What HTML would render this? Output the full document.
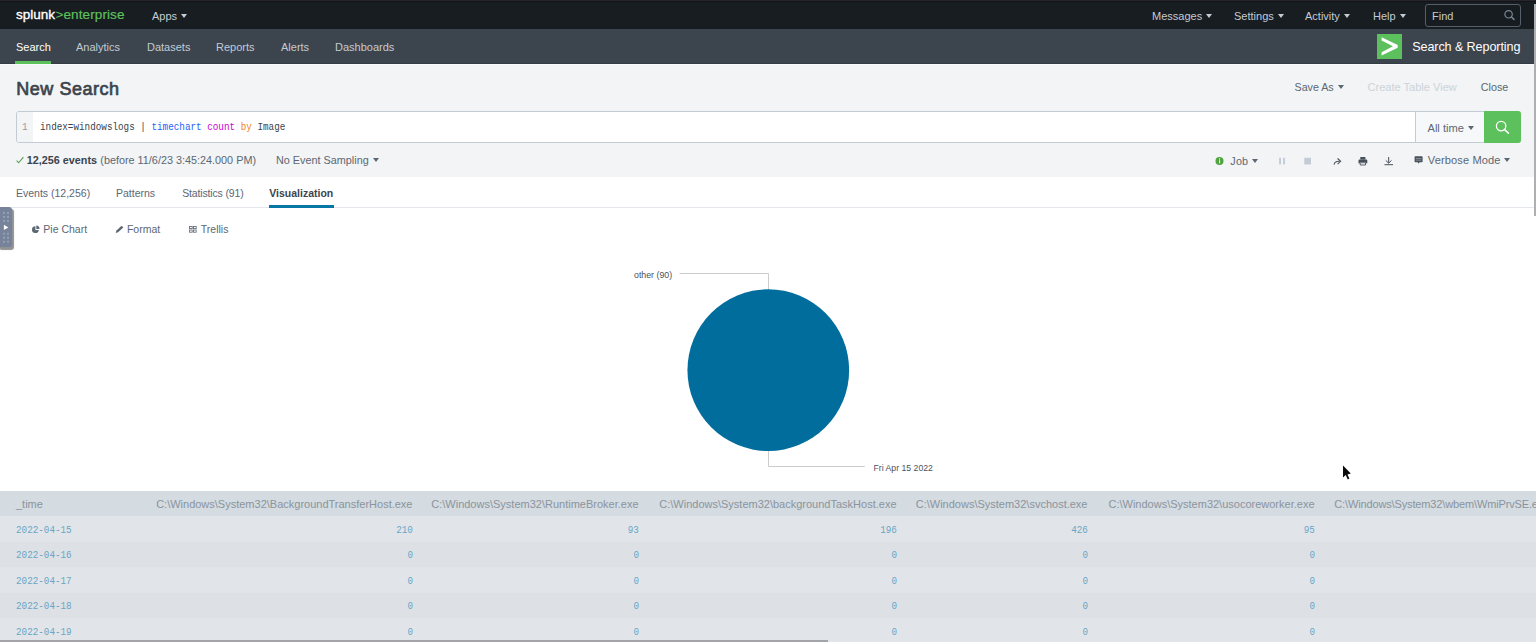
<!DOCTYPE html>
<html>
<head>
<meta charset="utf-8">
<title>Search | Splunk</title>
<style>
*{box-sizing:border-box;margin:0;padding:0}
html,body{width:1536px;height:642px;overflow:hidden;background:#fff}
body{font-family:"Liberation Sans",sans-serif;color:#3c444d;position:relative}
.abs{position:absolute;white-space:nowrap;line-height:1}
.mono{font-family:"Liberation Mono",monospace}
#topline{left:0;top:0;width:1536px;height:2px;background:linear-gradient(#27252b 0,#27252b 50%,#111518 50%,#111518 100%)}
#topbar{left:0;top:0;width:1536px;height:29px;background:#181d21}
#navbar{left:0;top:29px;width:1536px;height:35px;background:#3c444d}
#graybg{left:0;top:64px;width:1536px;height:113px;background:#f2f4f5}
.tb{color:#c3cbd4;font-size:11px;top:10.6px}
.nv{color:#c3cbd4;font-size:11px;top:41.7px}
.caret{display:inline-block;width:0;height:0;border-left:3.25px solid transparent;border-right:3.25px solid transparent;border-top:4px solid currentColor;vertical-align:middle;margin-left:4px;position:relative;top:-1px}
.th{font-size:11px;color:#8a949e}
.td{font-size:11.6px;color:#6aa5c5;transform:scaleX(0.80);transform-origin:right top}
.td.l{transform-origin:left top}
.sm{font-size:10.5px;color:#5c6773}
</style>
</head>
<body>
<div class="abs" id="topbar"></div>
<div class="abs" id="topline"></div>
<div class="abs" id="navbar"></div>
<div class="abs" id="graybg"></div>
<div class="abs" style="left:0;top:63px;width:1536px;height:1px;background:#353c44"></div>
<div class="abs" style="left:0;top:64px;width:1536px;height:1px;background:#f9fafa"></div>

<!-- top bar -->
<div class="abs" id="logo" style="left:16px;top:8.2px;font-size:13.5px;color:#fff;-webkit-text-stroke:0.35px #fff">splunk</div>
<div class="abs" id="logogt" style="left:55.5px;top:8.2px;font-size:13.5px;color:#5cc05c">&gt;</div>
<div class="abs" id="logoent" style="left:63.5px;top:8.2px;font-size:13.5px;color:#5cc05c;letter-spacing:0.1px;-webkit-text-stroke:0.2px #5cc05c">enterprise</div>
<div class="abs tb" id="apps" style="left:152px">Apps<span class="caret"></span></div>
<div class="abs tb" id="messages" style="left:1152px">Messages<span class="caret"></span></div>
<div class="abs tb" id="settings" style="left:1234px">Settings<span class="caret"></span></div>
<div class="abs tb" id="activity" style="left:1305px">Activity<span class="caret"></span></div>
<div class="abs tb" id="help" style="left:1373px">Help<span class="caret"></span></div>
<div class="abs" id="findbox" style="left:1425px;top:3.9px;width:95.8px;height:22.8px;border:1px solid #56606b;border-radius:3px;background:#171c20"></div>
<div class="abs tb" id="find" style="left:1432px;top:10.8px">Find</div>
<svg class="abs" id="findicon" style="left:1500px;top:6px" width="18" height="18" viewBox="1500 6 18 18"><circle cx="1508.6" cy="14.3" r="3.7" fill="none" stroke="#7b8793" stroke-width="1.2"/><line x1="1511.4" y1="17" x2="1514" y2="19.4" stroke="#7b8793" stroke-width="1.5" stroke-linecap="round"/></svg>

<!-- nav bar -->
<div class="abs nv" id="nsearch" style="left:16px;color:#fff">Search</div>
<div class="abs" id="nunder" style="left:15px;top:61px;width:36px;height:3px;background:#5cc05c"></div>
<div class="abs nv" id="nanalytics" style="left:76px">Analytics</div>
<div class="abs nv" id="ndatasets" style="left:147px">Datasets</div>
<div class="abs nv" id="nreports" style="left:216px">Reports</div>
<div class="abs nv" id="nalerts" style="left:281px">Alerts</div>
<div class="abs nv" id="ndash" style="left:335px">Dashboards</div>
<div class="abs" id="appicon" style="left:1376.9px;top:33.7px;width:25.3px;height:25.2px;background:#5cc05c"></div>
<svg class="abs" id="appiconsvg" style="left:1376px;top:33px" width="28" height="27" viewBox="1376 33 28 27"><path d="M1381.6 37.2 L1397.7 44.9 L1397.7 47.8 L1381.6 55.4 L1381.6 52.3 L1392.9 46.35 L1381.6 40.4 Z" fill="#fff"/></svg>
<div class="abs" id="apptitle" style="left:1412.2px;top:40.5px;font-size:12.6px;letter-spacing:-0.1px;color:#fff">Search &amp; Reporting</div>

<!-- title row -->
<div class="abs" id="title" style="left:16.3px;top:80.3px;font-size:18px;letter-spacing:0.52px;-webkit-text-stroke:0.7px #3c444d;color:#3c444d">New Search</div>
<div class="abs sm" id="saveas" style="left:1294.5px;top:82px;color:#5c6773;font-size:10.7px">Save As<span class="caret"></span></div>
<div class="abs sm" id="ctv" style="left:1367.5px;top:82px;color:#cdd3da;font-size:11.05px">Create Table View</div>
<div class="abs sm" id="close" style="left:1480.8px;top:82px;color:#5c6773;font-size:10.75px">Close</div>

<!-- search bar -->
<div class="abs" id="sbox" style="left:16px;top:111px;width:1505px;height:32px;border:1px solid #c3cbd4;border-radius:3px;background:#fff"></div>
<div class="abs" id="sgutter" style="left:17px;top:112px;width:16px;height:30px;background:#f2f4f5;border-radius:2px 0 0 2px"></div>
<div class="abs mono" id="lineno" style="left:22.3px;top:122px;font-size:10.7px;color:#959aa0;transform:scaleX(0.869);transform-origin:left top">1</div>
<div class="abs mono" id="query" style="left:40px;top:122px;font-size:10.7px;color:#3c444d;transform:scaleX(0.869);transform-origin:left top">index=windowslogs | <span style="color:#2662fc">timechart</span> <span style="color:#cf00cf">count</span> <span style="color:#f58220">by</span> Image</div>
<div class="abs" id="alltimebg" style="left:1415px;top:112px;width:69px;height:30px;background:#f7f8fa;border-left:1px solid #c3cbd4"></div>
<div class="abs sm" id="alltime" style="left:1427.5px;top:122.8px;font-size:11.1px">All time<span class="caret"></span></div>
<div class="abs" id="gobtn" style="left:1484px;top:111px;width:37px;height:32px;background:#5cc05c;border-radius:0 3px 3px 0"></div>
<svg class="abs" id="goicon" style="left:1484px;top:111px" width="37" height="32" viewBox="1484 111 37 32"><circle cx="1501.1" cy="126.1" r="4.7" fill="none" stroke="#fff" stroke-width="1.3"/><line x1="1504.6" y1="129.7" x2="1508.4" y2="133.1" stroke="#fff" stroke-width="1.6" stroke-linecap="round"/></svg>

<!-- status row -->
<svg class="abs" id="check" style="left:16px;top:156px" width="8" height="8" viewBox="0 0 8 8"><path d="M0.6 4.6 L2.7 6.8 L7.4 1.2" fill="none" stroke="#53a051" stroke-width="1.1"/></svg>
<div class="abs sm" id="events" style="left:26.8px;top:155.3px;color:#3c444d;font-weight:bold;font-size:10.8px">12,256 events</div>
<div class="abs sm" id="before" style="left:100.3px;top:155.3px;color:#5c6773;font-size:10.84px">(before 11/6/23 3:45:24.000 PM)</div>
<div class="abs sm" id="sampling" style="left:276px;top:155.3px;color:#5c6773;font-size:10.83px">No Event Sampling<span class="caret"></span></div>

<svg class="abs" id="jobicons" style="left:1208px;top:150px" width="312" height="22" viewBox="1208 150 312 22">
<circle cx="1219.5" cy="161" r="4" fill="#4fa43f"/>
<rect x="1219" y="158.4" width="1.1" height="1.2" fill="#fff"/><rect x="1219" y="160.3" width="1.1" height="2.9" fill="#fff"/>
<rect x="1279.1" y="157.8" width="1.9" height="6.6" fill="#c3cbd4"/><rect x="1283.1" y="157.8" width="1.9" height="6.6" fill="#c3cbd4"/>
<rect x="1304.3" y="157.8" width="6.7" height="6.6" fill="#c3cbd4"/>
<path d="M1334.1 164.6 C1334.3 162.2 1336.2 161.2 1339.6 161.3" fill="none" stroke="#48515b" stroke-width="1.1"/>
<path d="M1337.6 158.5 L1340.6 161.3 L1337.6 164.1" fill="none" stroke="#48515b" stroke-width="1.1"/>
<path d="M1360.3 157 H1365.4 V159.6 H1360.3 Z" fill="#48515b"/>
<path d="M1358.5 160.4 a1 1 0 0 1 1-1 H1366.3 a1 1 0 0 1 1 1 V163.2 H1365.6 V161.9 H1360.1 V163.2 H1358.5 Z" fill="#48515b"/>
<path d="M1360.2 162.7 H1365.5 V165 H1360.2 Z" fill="none" stroke="#48515b" stroke-width="0.9"/>
<path d="M1388.65 157 V163" fill="none" stroke="#48515b" stroke-width="1"/>
<path d="M1385.8 160.4 L1388.65 163.2 L1391.5 160.4" fill="none" stroke="#48515b" stroke-width="1"/>
<path d="M1384.5 164.7 H1393" fill="none" stroke="#48515b" stroke-width="1"/>
<path d="M1415.4 156.3 H1421.8 a0.8 0.8 0 0 1 0.8 0.8 V161.4 a0.8 0.8 0 0 1 -0.8 0.8 H1419.6 L1418 163.7 V162.2 H1415.4 a0.8 0.8 0 0 1 -0.8 -0.8 V157.1 a0.8 0.8 0 0 1 0.8 -0.8 Z" fill="#48515b"/>
<path d="M1415.8 158.5 H1421.4 M1415.8 160.2 H1421.4" stroke="#aeb6bf" stroke-width="0.6"/>
</svg>
<div class="abs sm" id="job" style="left:1230.3px;top:155.6px;color:#5c6773;font-size:10.8px;letter-spacing:0.2px">Job<span class="caret" style="margin-left:3.4px"></span></div>
<div class="abs sm" id="verbose" style="left:1427.8px;top:155px;color:#5c6773;font-size:11.1px;letter-spacing:0.1px">Verbose Mode<span class="caret" style="margin-left:3.2px"></span></div>

<!-- tabs -->
<div class="abs" id="tabline" style="left:0;top:207px;width:1536px;height:1px;background:#e4e8ec"></div>
<div class="abs sm" id="tab1" style="left:16px;top:187.5px;color:#5c6773">Events (12,256)</div>
<div class="abs sm" id="tab2" style="left:116px;top:187.5px;color:#5c6773">Patterns</div>
<div class="abs sm" id="tab3" style="left:182.2px;top:187.5px;color:#5c6773;letter-spacing:-0.15px">Statistics (91)</div>
<div class="abs sm" id="tab4" style="left:269.3px;top:187.5px;color:#3c444d;font-weight:bold">Visualization</div>
<div class="abs" id="tabunder" style="left:269px;top:205.2px;width:64.6px;height:2.5px;background:#0877a6"></div>

<!-- viz toolbar -->
<div class="abs" id="handle" style="left:-3px;top:207.4px;width:14.8px;height:39.7px;background:#76839a;border-radius:3px;box-shadow:2px 2.5px 0.8px rgba(110,110,110,0.75)"></div>
<svg class="abs" id="handlesvg" style="left:0;top:207px" width="14" height="42" viewBox="0 0 14 42"><rect x="3.1" y="5.0" width="1.8" height="1.8" fill="#99a5b7"/><rect x="7.1" y="5.0" width="1.8" height="1.8" fill="#99a5b7"/><rect x="3.1" y="9.0" width="1.8" height="1.8" fill="#99a5b7"/><rect x="7.1" y="9.0" width="1.8" height="1.8" fill="#99a5b7"/><rect x="3.1" y="13.0" width="1.8" height="1.8" fill="#99a5b7"/><rect x="7.1" y="13.0" width="1.8" height="1.8" fill="#99a5b7"/><rect x="3.1" y="25.8" width="1.8" height="1.8" fill="#99a5b7"/><rect x="7.1" y="25.8" width="1.8" height="1.8" fill="#99a5b7"/><rect x="3.1" y="29.8" width="1.8" height="1.8" fill="#99a5b7"/><rect x="7.1" y="29.8" width="1.8" height="1.8" fill="#99a5b7"/><rect x="3.1" y="33.8" width="1.8" height="1.8" fill="#99a5b7"/><rect x="7.1" y="33.8" width="1.8" height="1.8" fill="#99a5b7"/><path d="M3.9 17.8 L8.4 20.45 L3.9 23.1 Z" fill="#fff"/></svg>
<svg class="abs" id="pieicon" style="left:32px;top:225px" width="8" height="9" viewBox="0 0 8 9"><path d="M3.4 1.2 A3.4 3.4 0 1 0 6.8 4.9 L3.4 4.9 Z" fill="#5c6773"/><path d="M4.3 0.5 A3.4 3.4 0 0 1 7.5 3.9 L4.3 3.9 Z" fill="#5c6773"/></svg>
<div class="abs sm" id="piechart" style="color:#5c6773;left:43.3px;top:223.9px">Pie Chart</div>
<svg class="abs" id="fmticon" style="left:115px;top:225px" width="9" height="9" viewBox="0 0 9 9"><path d="M0.7 7.9 L1.5 5.6 L6.6 0.8 L8.3 2.4 L3.1 7.3 Z" fill="#5c6773"/></svg>
<div class="abs sm" id="format" style="color:#5c6773;left:126.9px;top:223.9px">Format</div>
<svg class="abs" id="trelicon" style="left:189px;top:226px" width="8" height="7" viewBox="0 0 8 7"><g fill="none" stroke="#5c6773" stroke-width="0.8"><rect x="0.4" y="0.4" width="2.8" height="2.2"/><rect x="4.4" y="0.4" width="2.8" height="2.2"/><rect x="0.4" y="4" width="2.8" height="2.2"/><rect x="4.4" y="4" width="2.8" height="2.2"/></g></svg>
<div class="abs sm" id="trellis" style="color:#5c6773;left:200.8px;top:223.9px">Trellis</div>

<!-- chart -->
<svg class="abs" id="chart" style="left:568px;top:250px" width="432" height="240" viewBox="568 250 432 240">
<path d="M679.6 273.5 H768.5 V290" fill="none" stroke="#cccccc" stroke-width="1"/>
<path d="M768.5 450 V466.5 H864.8" fill="none" stroke="#cccccc" stroke-width="1"/>
<circle cx="768.3" cy="370.15" r="80.85" fill="#006d9c"/>
<path d="M768.4 289.4 V368" stroke="#1a7aa5" stroke-width="0.5" opacity="0.22"/>
</svg>
<div class="abs" id="lblother" style="left:634px;top:270.6px;font-size:8.8px;color:#4a535d">other (90)</div>
<div class="abs" id="lblfri" style="left:873.5px;top:463.5px;font-size:8.7px;color:#4a535d">Fri Apr 15 2022</div>

<svg class="abs" id="cursor" style="left:1338px;top:462px" width="18" height="22" viewBox="1338 462 18 22"><path d="M1343 465.6 L1343 477.6 L1345.7 475.1 L1347.8 479.4 L1349.4 478.6 L1347.4 474.4 L1350.8 473.6 Z" fill="#0a0a0a"/></svg>
<!-- table -->
<div class="abs" id="thead" style="left:0;top:491px;width:1536px;height:25px;background:#d4dbe1"></div>
<div class="abs" id="row0" style="left:0;top:516px;width:1536px;height:25.6px;background:#e1e5e9"></div>
<div class="abs" id="row1" style="left:0;top:541.6px;width:1536px;height:25.6px;background:#dde1e5"></div>
<div class="abs" id="row2" style="left:0;top:567.2px;width:1536px;height:25.6px;background:#e1e5e9"></div>
<div class="abs" id="row3" style="left:0;top:592.8px;width:1536px;height:25.6px;background:#dde1e5"></div>
<div class="abs" id="row4" style="left:0;top:618.4px;width:1536px;height:24px;background:#e1e5e9"></div>
<div class="abs th" id="th0" style="left:16px;top:499px">_time</div>
<div class="abs th" id="th1" style="right:1123.5px;top:499px">C:\Windows\System32\BackgroundTransferHost.exe</div>
<div class="abs th" id="th2" style="right:897.5px;top:499px">C:\Windows\System32\RuntimeBroker.exe</div>
<div class="abs th" id="th3" style="right:639.5px;top:499px">C:\Windows\System32\backgroundTaskHost.exe</div>
<div class="abs th" id="th4" style="right:448.5px;top:499px">C:\Windows\System32\svchost.exe</div>
<div class="abs th" id="th5" style="right:221.5px;top:499px">C:\Windows\System32\usocoreworker.exe</div>
<div class="abs th" id="th6" style="left:1334.3px;top:499px;letter-spacing:-0.14px">C:\Windows\System32\wbem\WmiPrvSE.exe</div>
<div class="abs td l mono" id="d0" style="left:16px;top:523.5px">2022-04-15</div>
<div class="abs td mono" id="v0_0" style="right:1123.5px;top:523.5px">210</div>
<div class="abs td mono" id="v0_1" style="right:897.5px;top:523.5px">93</div>
<div class="abs td mono" id="v0_2" style="right:639.5px;top:523.5px">196</div>
<div class="abs td mono" id="v0_3" style="right:448.5px;top:523.5px">426</div>
<div class="abs td mono" id="v0_4" style="right:221.5px;top:523.5px">95</div>
<div class="abs td l mono" id="d1" style="left:16px;top:549.1px">2022-04-16</div>
<div class="abs td mono" id="v1_0" style="right:1123.5px;top:549.1px">0</div>
<div class="abs td mono" id="v1_1" style="right:897.5px;top:549.1px">0</div>
<div class="abs td mono" id="v1_2" style="right:639.5px;top:549.1px">0</div>
<div class="abs td mono" id="v1_3" style="right:448.5px;top:549.1px">0</div>
<div class="abs td mono" id="v1_4" style="right:221.5px;top:549.1px">0</div>
<div class="abs td l mono" id="d2" style="left:16px;top:574.7px">2022-04-17</div>
<div class="abs td mono" id="v2_0" style="right:1123.5px;top:574.7px">0</div>
<div class="abs td mono" id="v2_1" style="right:897.5px;top:574.7px">0</div>
<div class="abs td mono" id="v2_2" style="right:639.5px;top:574.7px">0</div>
<div class="abs td mono" id="v2_3" style="right:448.5px;top:574.7px">0</div>
<div class="abs td mono" id="v2_4" style="right:221.5px;top:574.7px">0</div>
<div class="abs td l mono" id="d3" style="left:16px;top:600.3px">2022-04-18</div>
<div class="abs td mono" id="v3_0" style="right:1123.5px;top:600.3px">0</div>
<div class="abs td mono" id="v3_1" style="right:897.5px;top:600.3px">0</div>
<div class="abs td mono" id="v3_2" style="right:639.5px;top:600.3px">0</div>
<div class="abs td mono" id="v3_3" style="right:448.5px;top:600.3px">0</div>
<div class="abs td mono" id="v3_4" style="right:221.5px;top:600.3px">0</div>
<div class="abs td l mono" id="d4" style="left:16px;top:625.9px">2022-04-19</div>
<div class="abs td mono" id="v4_0" style="right:1123.5px;top:625.9px">0</div>
<div class="abs td mono" id="v4_1" style="right:897.5px;top:625.9px">0</div>
<div class="abs td mono" id="v4_2" style="right:639.5px;top:625.9px">0</div>
<div class="abs td mono" id="v4_3" style="right:448.5px;top:625.9px">0</div>
<div class="abs td mono" id="v4_4" style="right:221.5px;top:625.9px">0</div>
<div class="abs" id="hscroll" style="left:0;top:639.5px;width:828px;height:3px;background:#a3a4a8"></div>
<div class="abs" id="vscroll" style="left:1533.7px;top:3.5px;width:2.3px;height:212.7px;background:#aeafb3"></div>
</body>
</html>
